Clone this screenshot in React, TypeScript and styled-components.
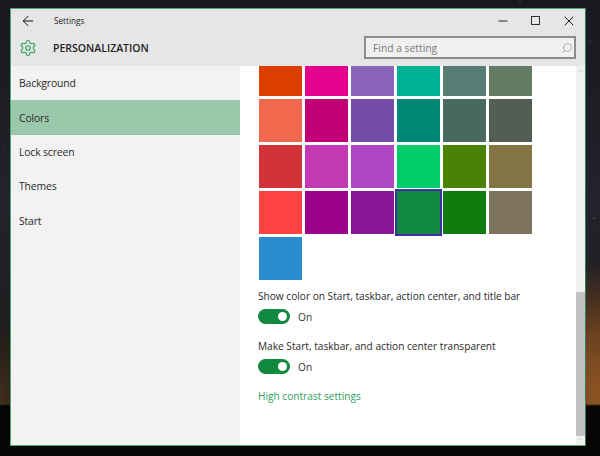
import { createGlobalStyle, styled } from "styled-components";
import { ArrowLeft, Minus, Search, Settings, X } from "lucide-react";

const GlobalStyle = createGlobalStyle`
    html, body { margin: 0; padding: 0; }
    body {
        width: 600px;
        height: 456px;
        overflow: hidden;
        font-family: "Open Sans", "Noto Sans", sans-serif;
        background:
            radial-gradient(circle 1px at 590px 42px, #55565c 0%, transparent 100%),
            radial-gradient(circle 1px at 594px 218px, #77787c 0%, transparent 100%),
            radial-gradient(circle 1px at 120px 3px, #55565c 0%, transparent 100%),
            radial-gradient(circle 1px at 520px 2px, #66666e 0%, transparent 100%),
            radial-gradient(circle 1px at 4px 150px, #4a4b50 0%, transparent 100%),
            linear-gradient(180deg, transparent 404px, #060504 406px),
            radial-gradient(ellipse 60px 130px at 596px 392px, #8f5523 0%, #6a4120 45%, transparent 100%),
            radial-gradient(ellipse 36px 80px at 0px 402px, #43301d 0%, transparent 100%),
            linear-gradient(180deg, #18191e 0%, #22232b 45%, #1f1e20 70%, #120e0c 90%);
    }
`;

const Desktop = styled.div`
    padding: 8px 14px 10px 10px;
`;

const Window = styled.div`
    width: 574px;
    height: 436px;
    border: 1px solid #4aa673;
    border-right-color: #2e7d5a;
    background: #fff;
    display: flex;
    flex-direction: column;
`;

const Top = styled.header`
    height: 57px;
    background: #e6e6e6;
    display: flex;
    flex-direction: column;
`;

const TitleBar = styled.div`
    height: 23px;
    display: flex;
    align-items: center;
    color: #222;
    font-size: 8.2px;
`;

const BackButton = styled.span`
    width: 33px;
    padding-left: 9px;
    box-sizing: border-box;
    display: flex;
    color: #111;
`;

const WindowTitle = styled.span`
    margin-left: 10px;
    flex: 1;
`;

const CaptionButton = styled.span`
    width: 33px;
    display: flex;
    justify-content: center;
    align-items: center;
    color: #222;
`;

const MaxIcon = styled.span`
    width: 7px;
    height: 7px;
    border: 1px solid #333;
`;

const HeaderRow = styled.div`
    flex: 1;
    display: flex;
    align-items: center;
    padding: 0 9px 3px 8px;
`;

const HeaderTitle = styled.h1`
    margin: 0 0 0 16px;
    flex: 1;
    font-size: 10.5px;
    font-weight: 600;
    color: #222;
`;

const SearchBox = styled.div`
    width: 212px;
    height: 23px;
    box-sizing: border-box;
    border: 2px solid #8c8c8c;
    background: #f0f0f0;
    display: flex;
    align-items: center;
    justify-content: space-between;
    padding: 0 1px 0 7px;
    color: #7a7a7a;
    font-size: 10.3px;
`;

const Body = styled.div`
    flex: 1;
    min-height: 0;
    display: flex;
`;

const Sidebar = styled.nav`
    width: 229px;
    background: #f2f2f2;
`;

const NavItem = styled.div<{ $active?: boolean }>`
    height: 34.4px;
    padding-left: 8px;
    display: flex;
    align-items: center;
    font-size: 10.4px;
    letter-spacing: -0.15px;
    color: #2a2a2a;
    background: ${(p) => (p.$active ? "#99c9aa" : "transparent")};
`;

const Content = styled.main`
    flex: 1;
    min-width: 0;
    overflow: hidden;
    padding-left: 18px;
`;

const Swatches = styled.div`
    display: grid;
    grid-template-columns: repeat(6, 43px);
    grid-auto-rows: 43px;
    gap: 3px;
    margin: -13px 0 8px 1px;
`;

const Swatch = styled.div<{ $color: string; $selected?: boolean }>`
    background: ${(p) => p.$color};
    outline: ${(p) => (p.$selected ? "2px solid #3f2ea6" : "none")};
    z-index: ${(p) => (p.$selected ? 1 : 0)};
`;

const Setting = styled.section`
    & + & {
        margin-top: 14px;
    }
`;

const Label = styled.div`
    font-size: 10.15px;
    line-height: 16px;
    color: #2a2a2a;
`;

const ToggleRow = styled.div`
    display: flex;
    align-items: center;
    height: 15px;
    margin-top: 5px;
    font-size: 10.15px;
    color: #333;
`;

const Toggle = styled.span`
    position: relative;
    width: 32px;
    height: 15px;
    margin-right: 8px;
    border-radius: 8px;
    background: #118a40;

    &::after {
        content: "";
        position: absolute;
        right: 3.5px;
        top: 3px;
        width: 9px;
        height: 9px;
        border-radius: 50%;
        background: #fff;
    }
`;

const LinkText = styled.a`
    display: block;
    margin-top: 14px;
    font-size: 10.15px;
    line-height: 16px;
    color: #2f9e5f;
`;

const Scrollbar = styled.aside`
    width: 9px;
    background: #f0f0f0;
    display: flex;
    flex-direction: column;
    align-items: center;
    color: #b0b0b0;
    font-size: 6px;
`;

const ScrollArrow = styled.span`
    height: 9px;
    line-height: 9px;
`;

const ScrollGap = styled.div`
    flex: 1;
    min-height: 0;
`;

const ScrollThumb = styled.div`
    width: 100%;
    height: 144px;
    background: #c2c2c2;
`;

const colors = [
    "#dc3d00", "#e6008e", "#8a64b8", "#00b294", "#567c73", "#647c64",
    "#f2684f", "#bf0077", "#744da9", "#018574", "#486860", "#525e54",
    "#d13438", "#c239b3", "#b146c2", "#00cc6a", "#498205", "#847545",
    "#ff4343", "#9a0089", "#881798", "#10893e", "#107c10", "#7e735f",
    "#298ccf",
];

export default function App() {
    return (
        <Desktop>
            <GlobalStyle />
            <Window>
                <Top>
                    <TitleBar>
                        <BackButton><ArrowLeft size={16} strokeWidth={1.5} /></BackButton>
                        <WindowTitle>Settings</WindowTitle>
                        <CaptionButton><Minus size={14} strokeWidth={1.7} /></CaptionButton>
                        <CaptionButton><MaxIcon /></CaptionButton>
                        <CaptionButton><X size={16} strokeWidth={1.5} /></CaptionButton>
                    </TitleBar>
                    <HeaderRow>
                        <Settings size={18} color="#35a366" strokeWidth={1.6} />
                        <HeaderTitle>PERSONALIZATION</HeaderTitle>
                        <SearchBox>
                            Find a setting
                            <Search size={12} color="#999" strokeWidth={1.5} style={{ transform: "scaleX(-1)" }} />
                        </SearchBox>
                    </HeaderRow>
                </Top>
                <Body>
                    <Sidebar>
                        <NavItem>Background</NavItem>
                        <NavItem $active>Colors</NavItem>
                        <NavItem>Lock screen</NavItem>
                        <NavItem>Themes</NavItem>
                        <NavItem>Start</NavItem>
                    </Sidebar>
                    <Content>
                        <Swatches>
                            {colors.map((c, i) => (
                                <Swatch key={i} $color={c} $selected={c === "#10893e"} />
                            ))}
                        </Swatches>
                        <Setting>
                            <Label>Show color on Start, taskbar, action center, and title bar</Label>
                            <ToggleRow><Toggle />On</ToggleRow>
                        </Setting>
                        <Setting>
                            <Label>Make Start, taskbar, and action center transparent</Label>
                            <ToggleRow><Toggle />On</ToggleRow>
                        </Setting>
                        <LinkText>High contrast settings</LinkText>
                    </Content>
                    <Scrollbar>
                        <ScrollArrow>︿</ScrollArrow>
                        <ScrollGap />
                        <ScrollThumb />
                        <ScrollArrow>﹀</ScrollArrow>
                    </Scrollbar>
                </Body>
            </Window>
        </Desktop>
    );
}
